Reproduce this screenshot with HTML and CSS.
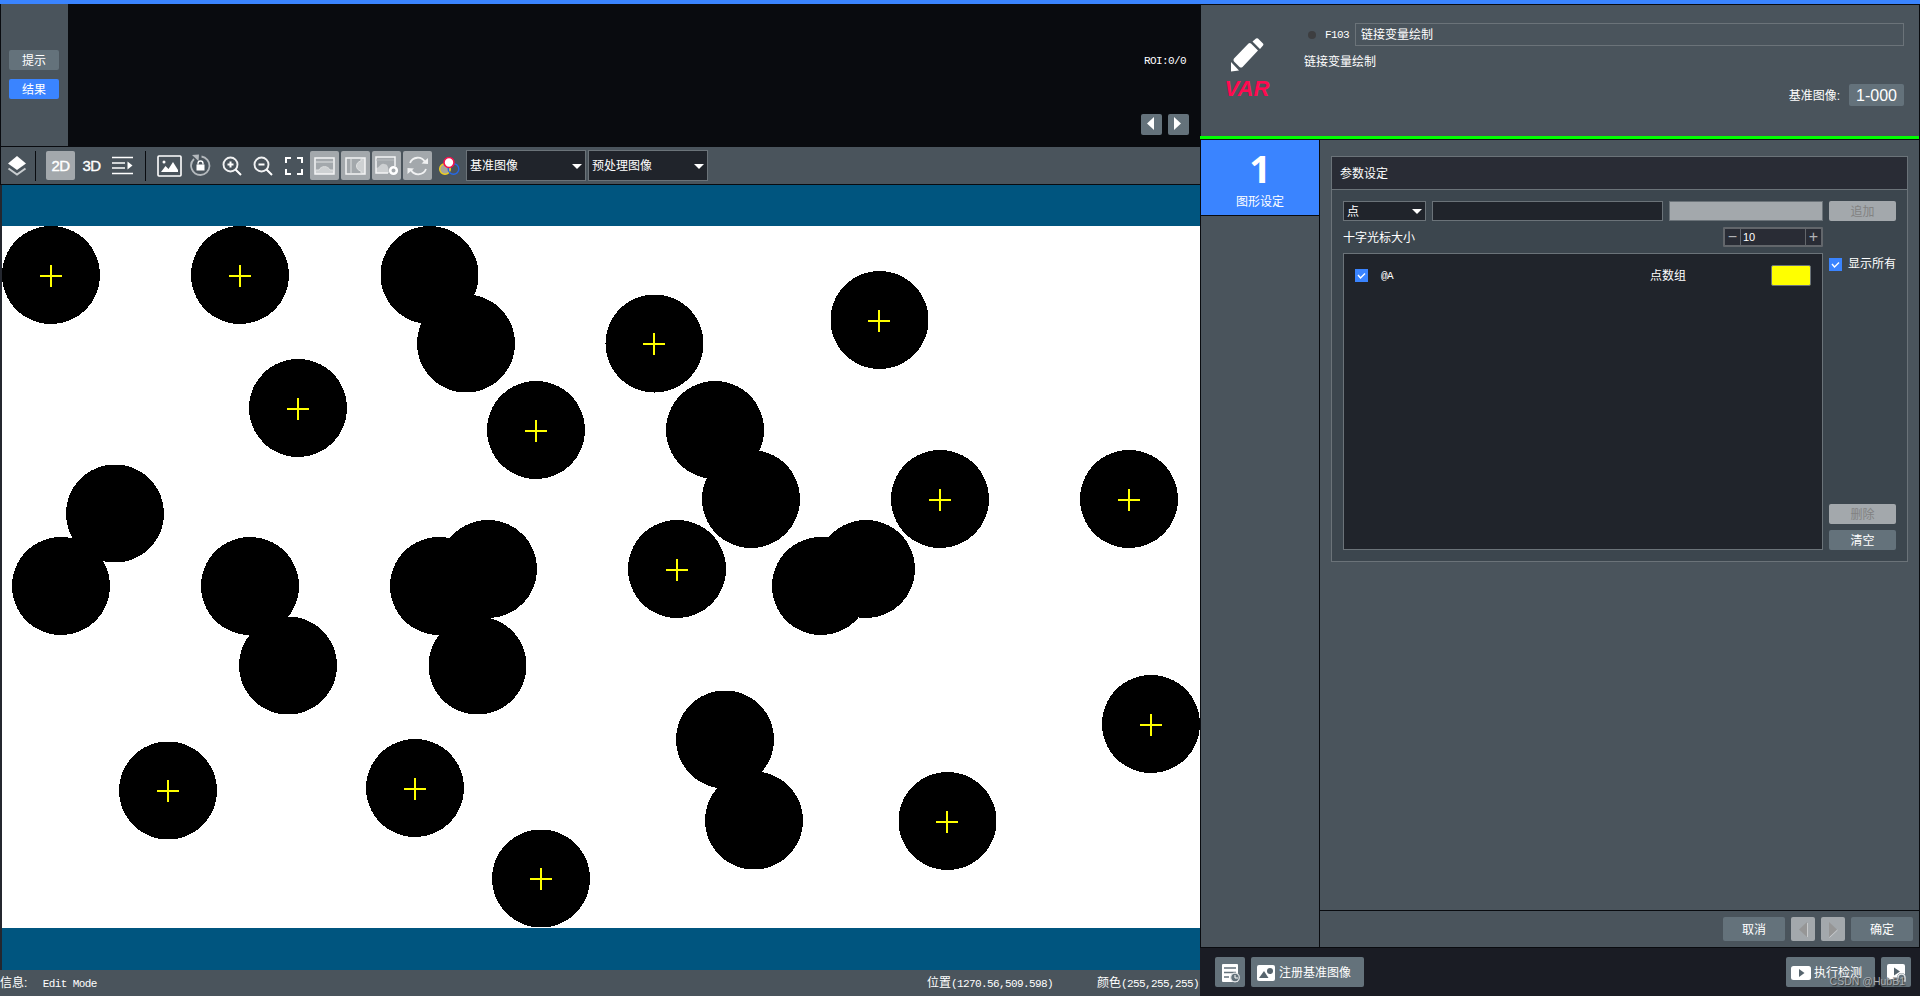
FILE: index.html
```html
<!DOCTYPE html>
<html lang="zh-CN">
<head>
  <meta charset="UTF-8">
  <title>链接变量绘制</title>
  <link rel="stylesheet" href="styles.css">
</head>
<body>
  <div class="top-line"></div>
  <div class="app">

    <!-- Left side: result view, toolbar, image -->
    <div class="viewer">
      <div class="result">
        <div class="result-tabs">
          <button class="btn">提示</button>
          <button class="btn active">结果</button>
        </div>
        <div class="result-view">
          <span class="roi mono">ROI:0/0</span>
          <div class="pager">
            <button class="btn"><svg width="21" height="21"><path d="M13 3v13L6 9.500z" fill="#fff"/></svg></button>
            <button class="btn"><svg width="21" height="21"><path d="M6 3v13l7-6.500z" fill="#fff"/></svg></button>
          </div>
        </div>
      </div>

      <div class="toolbar">
        <div class="tool layers">
          <svg width="20" height="22" viewBox="0 0 20 22"><path d="M10 1l9 7.500-9 6.500-9-6.500z" fill="#fff"/><path d="M1.500 13.500L10 19.500l8.500-6" fill="none" stroke="#c9cdd0" stroke-width="2"/></svg>
        </div>
        <div class="sep"></div>
        <div class="tool on text">2D</div>
        <div class="tool text">3D</div>
        <div class="tool">
          <svg width="23" height="19" viewBox="0 0 23 19"><path d="M1 1.500h21M1 7h13M1 12h13M1 17.500h21" stroke="#fff" stroke-width="1.700"/><path d="M16.500 5.500v8l5-4z" fill="#fff"/></svg>
        </div>
        <div class="sep second"></div>
        <div class="tool">
          <svg width="25" height="22" viewBox="0 0 25 22"><rect x="1" y="1" width="23" height="20" rx="1" fill="none" stroke="#fff" stroke-width="1.600"/><path d="M4 17l4.500-6 3 3L16 7l5 8v2z" fill="#fff"/><circle cx="7" cy="7" r="1.500" fill="#fff"/></svg>
        </div>
        <div class="tool">
          <svg width="23" height="23" viewBox="0 0 23 23"><path d="M5 5a9.300 9.300 0 0 0 6.500 16 9.300 9.300 0 0 0 1-18.500" fill="none" stroke="#b4b9bd" stroke-width="1.800"/><path d="M3 1l7-.5-.5 6.500z" fill="#b4b9bd"/><rect x="7.500" y="10.500" width="8" height="6" fill="#fff"/><path d="M9 10.500v-1a2.500 2.500 0 0 1 5 0v1" fill="none" stroke="#fff" stroke-width="1.300"/></svg>
        </div>
        <div class="tool">
          <svg width="20" height="20" viewBox="0 0 20 20"><circle cx="8.500" cy="8.500" r="7" fill="none" stroke="#f0f1f2" stroke-width="1.900"/><path d="M13.500 13.500l5.500 5.500M8.500 5.500v6M5.500 8.500h6" stroke="#fff" stroke-width="2"/></svg>
        </div>
        <div class="tool">
          <svg width="20" height="20" viewBox="0 0 20 20"><circle cx="8.500" cy="8.500" r="7" fill="none" stroke="#f0f1f2" stroke-width="1.900"/><path d="M13.500 13.500l5.500 5.500M5.500 8.500h6" stroke="#fff" stroke-width="2"/></svg>
        </div>
        <div class="tool">
          <svg width="18" height="18" viewBox="0 0 18 18"><path d="M1 6V1h5M12 1h5v5M17 12v5h-5M6 17H1v-5" fill="none" stroke="#fff" stroke-width="2"/></svg>
        </div>
        <div class="tool on">
          <svg width="21" height="18" viewBox="0 0 21 18"><path d="M1 13h4c2-4.500 9-4.500 11 0h4v4H1z" fill="#cdd0d2"/><rect x="1" y="1" width="19" height="16" fill="none" stroke="#f4f4f5" stroke-width="1.500"/><path d="M1 5h19M1 13h4c2-4.500 9-4.500 11 0h4" fill="none" stroke="#dfe1e2"/></svg>
        </div>
        <div class="tool on">
          <svg width="21" height="18" viewBox="0 0 21 18"><path d="M20 1v16h-4v-3c-6-1-6-9 0-10V1z" fill="#cdd0d2"/><rect x="1" y="1" width="19" height="16" fill="none" stroke="#f4f4f5" stroke-width="1.500"/><path d="M6 1v16M16 1v3c-6 1-6 9 0 10v3" fill="none" stroke="#dfe1e2"/></svg>
        </div>
        <div class="tool on">
          <svg width="24" height="20" viewBox="0 0 24 20"><path d="M1 12c4 0 4-5 8-4 4 0 4 3 5 9H1z" fill="#cdd0d2"/><path d="M13 17H1V1h19v9" fill="none" stroke="#f4f4f5" stroke-width="1.500"/><path d="M1 4h18" stroke="#b9bdc0"/><circle cx="18.500" cy="14.500" r="3.300" fill="none" stroke="#fff" stroke-width="2.600"/></svg>
        </div>
        <div class="tool on">
          <svg width="22" height="20" viewBox="0 0 22 20"><path d="M3 7a8.300 8.300 0 0 1 15-1M19 13A8.300 8.300 0 0 1 4 14" fill="none" stroke="#f0f1f2" stroke-width="1.800"/><path d="M14.500 7.500l6.500.5v-6zM7 12.500L.5 12v6z" fill="#f0f1f2"/></svg>
        </div>
        <div class="tool rgb">
          <svg width="22" height="20" viewBox="0 0 22 20"><circle cx="7" cy="13" r="5.300" fill="#a8a69a" stroke="#f2d21c" stroke-width="1.400"/><circle cx="15.500" cy="13" r="5.300" fill="none" stroke="#2468e8" stroke-width="1.400"/><circle cx="11" cy="6.500" r="5" fill="#fff" stroke="#f5114e" stroke-width="1.600"/></svg>
        </div>
        <div class="select">基准图像<i></i></div>
        <div class="select">预处理图像<i></i></div>
      </div>

      <div class="canvas">
        <svg width="1198" height="785" viewBox="2 185 1198 785">
          <rect x="2" y="226" width="1198" height="702" fill="#fff"/>
          <g id="dots" shape-rendering="crispEdges"></g>
        </svg>
      </div>

      <div class="status">
        <span>信息: <span class="mono mode">Edit Mode</span></span>
        <span class="pos">位置<span class="mono">(1270.56,509.598)</span></span>
        <span>颜色<span class="mono">(255,255,255)</span></span>
      </div>
    </div>

    <!-- Right side: tool settings -->
    <div class="settings">
      <div class="head">
        <div class="logo">
          <svg width="34" height="34" viewBox="0 0 34 34"><path d="M22.500 3.500L26 .5q1-.7 2 0l5 5q.8 1 0 2l-3 3.500zM21 5.500l7 7L12.500 29q-1.500 1-3 0L4 23.500q-1-1.500 0-3L18.500 5.500q1.200-1 2.500 0zM1 24l8 8.500-8 1z" fill="#fff"/></svg>
          <span>VAR</span>
        </div>
        <div class="head-info">
          <div class="name-row">
            <span class="dot"></span>
            <span class="mono">F103</span>
            <div class="name-input">链接变量绘制</div>
          </div>
          <div class="desc">链接变量绘制</div>
          <div class="base-row">
            <span>基准图像:</span>
            <button class="btn base-btn">1-000</button>
          </div>
        </div>
      </div>

      <div class="work">
        <div class="steps">
          <div class="step"><b>1</b><span>图形设定</span></div>
        </div>
        <div class="page">
          <div class="panel">
            <div class="panel-title">参数设定</div>
            <div class="panel-body">
              <div class="add-row">
                <div class="select small">点<i></i></div>
                <div class="field"></div>
                <div class="field off"></div>
                <button class="btn off">追加</button>
              </div>
              <div class="size-row">
                <span>十字光标大小</span>
                <div class="spinner"><i>−</i><span class="num">10</span><i>+</i></div>
              </div>
              <div class="list-row">
                <div class="list">
                  <div class="item">
                    <span class="check"><svg width="13" height="13"><path d="M3 6l2.500 3L10 4.500" fill="none" stroke="#fff" stroke-width="1.400"/></svg></span>
                    <span class="mono item-name">@A</span>
                    <span class="item-type">点数组</span>
                    <span class="swatch"></span>
                  </div>
                </div>
                <div class="side">
                  <label class="show-all"><span class="check"><svg width="13" height="13"><path d="M3 6l2.500 3L10 4.500" fill="none" stroke="#fff" stroke-width="1.400"/></svg></span>显示所有</label>
                  <button class="btn off">删除</button>
                  <button class="btn">清空</button>
                </div>
              </div>
            </div>
          </div>
          <div class="actions">
            <button class="btn wide">取消</button>
            <button class="btn off"><svg width="24" height="24"><path d="M16 4v15l-8-7.500z" fill="#969696"/><path d="M16.500 5v14" stroke="#c8cacc"/></svg></button>
            <button class="btn off"><svg width="24" height="24"><path d="M8 4v15l8-7.500z" fill="#969696"/><path d="M8.500 19.500l8-7.500" stroke="#c8cacc"/></svg></button>
            <button class="btn wide">确定</button>
          </div>
        </div>
      </div>

      <div class="bottom">
        <button class="btn square">
          <svg width="19" height="20" viewBox="0 0 19 20"><path d="M2 1h14q1 0 1 1v16q0 1-1 1H2q-1 0-1-1V2q0-1 1-1z" fill="#fff"/><path d="M3 5h12M3 9.500h12M3 14h5" stroke="#64727b" stroke-width="1.500"/><circle cx="14" cy="14.500" r="4.300" fill="#64727b" stroke="#dfe2e4" stroke-width="1.200"/><path d="M14 12v3h3" fill="none" stroke="#fff"/></svg>
        </button>
        <button class="btn register">
          <svg width="18" height="16" viewBox="0 0 18 16"><rect width="18" height="16" rx="2" fill="#fff"/><path d="M2 13l5-7 4.500 7z" fill="#56646d"/><circle cx="13" cy="6" r="3" fill="#56646d"/></svg>
          注册基准图像
        </button>
        <div class="fill"></div>
        <button class="btn run">
          <svg width="20" height="14" viewBox="0 0 20 14"><rect width="20" height="14" rx="2.500" fill="#fff"/><path d="M8 3v8l5.500-4z" fill="#56646d"/></svg>
          执行检测
        </button>
        <button class="btn square">
          <svg width="20" height="20" viewBox="0 0 20 20"><rect x="1" y="1" width="18" height="15" rx="2" fill="#fff"/><path d="M8 4.500v8l6-4z" fill="#56646d"/><path d="M12 19v-4.500a3.500 3.500 0 0 1 7 0V19" fill="#64727b" stroke="#64727b" stroke-width="2"/><path d="M13.500 18H12v-3.500a3.300 3.300 0 0 1 7 0V18h-1.500" fill="none" stroke="#e4e6e8" stroke-width="1.400"/></svg>
        </button>
      </div>
      <div class="watermark">CSDN @HubB1</div>
    </div>
  </div>

  <script>
    // x, y, 1 = has a cross mark
    const dots = [
      [51, 275, 1], [240, 275, 1], [429.5, 275, 0], [466, 343.5, 0], [654.5, 343.5, 1],
      [879.5, 320, 1], [298, 408, 1], [536, 430, 1], [715, 430, 0], [751, 499, 0],
      [940, 499, 1], [1129, 499, 1], [115, 513.5, 0], [61, 586, 0], [250, 586, 0],
      [439, 586, 0], [488, 569, 0], [677, 569, 1], [821, 586, 0], [866, 569, 0],
      [288, 665.5, 0], [477.5, 665.5, 0], [725, 739.5, 0], [754, 820.5, 0], [947.5, 821, 1],
      [1151, 724, 1], [168, 790.5, 1], [415, 788, 1], [541, 878.5, 1]
    ];
    let out = '';
    dots.forEach(([x, y]) => {
      out += `<circle cx="${x}" cy="${y}" r="49"/>`;
    });
    dots.filter(d => d[2]).forEach(([x, y]) => {
      x = Math.floor(x);
      y = Math.floor(y + 1);
      out += `<path d="M${x - 11} ${y}h22M${x} ${y - 11}v22" stroke="#ff0" stroke-width="2"/>`;
    });
    document.getElementById('dots').innerHTML = out;
  </script>
</body>
</html>
```
FILE: styles.css
```css
* {
  box-sizing: border-box;
}
body {
  margin: 0;
  height: 996px;
  overflow: hidden;
  background: #090b0f;
  color: #fff;
  font-family: "Liberation Sans", "Noto Sans CJK SC", sans-serif;
  font-size: 12px;
  line-height: 16px;
}
svg {
  display: block;
  flex: none;
}
.mono {
  font-family: "Liberation Mono", monospace;
  font-size: 11px;
  letter-spacing: -0.6px;
}
.top-line {
  height: 4px;
  background: #3a84ff;
}
.app {
  display: flex;
  height: 992px;
}
.btn {
  display: flex;
  align-items: center;
  justify-content: center;
  height: 20px;
  padding: 1px 0 0;
  border: 0;
  border-radius: 2px;
  background: #64727b;
  color: #fff;
  font: inherit;
}
.btn.active {
  background: #3a84ff;
}
.btn.off {
  background: #a3a8ac;
  color: #828282;
}

/* viewer */
.viewer {
  display: flex;
  flex-direction: column;
  width: 1200px;
}
.result {
  display: flex;
  height: 142px;
  padding-left: 1px;
}
.result-tabs {
  display: flex;
  flex-direction: column;
  gap: 9px;
  width: 67px;
  padding: 46px 9px 0 8px;
  background: #4a545c;
}
.result-view {
  flex: 1;
  display: flex;
  flex-direction: column;
  align-items: flex-end;
  padding: 49px 11px 0 0;
}
.roi {
  padding-right: 3px;
}
.pager {
  display: flex;
  gap: 6px;
  margin-top: 45px;
}
.pager .btn {
  width: 21px;
  height: 21px;
  padding: 0;
}
.toolbar {
  display: flex;
  align-items: center;
  gap: 2px;
  height: 39px;
  margin-left: 1px;
  border-top: 1px solid #090b0f;
  border-bottom: 1px solid #090b0f;
  background: #4a545c;
}
.tool {
  display: flex;
  align-items: center;
  justify-content: center;
  width: 29px;
  height: 29px;
  border-radius: 2px;
}
.tool.layers {
  width: 32px;
}
.tool.on {
  background: #a3a8ac;
}
.tool.text {
  font-size: 15px;
  letter-spacing: -0.5px;
  -webkit-text-stroke: 0.4px #fff;
}
.tool.rgb {
  margin-right: 1px;
}
.sep {
  width: 1px;
  height: 30px;
  margin-right: 8px;
  background: #090b0f;
}
.sep.second {
  margin: 0 7px 0 6px;
}
.select {
  display: flex;
  align-items: center;
  justify-content: space-between;
  width: 120px;
  height: 31px;
  padding: 1px 3px 0 3px;
  border: 1px solid #6b7379;
  background: #20242b;
}
.select i {
  border: 5px solid transparent;
  border-top-color: #fff;
  border-bottom: 0;
}
.canvas {
  height: 785px;
  padding-left: 2px;
  background: linear-gradient(to right, #24272f 2px, #00557f 2px);
}
.status {
  display: flex;
  height: 26px;
  padding: 1px 1px 0 0;
  align-items: center;
  background: #4a545c;
}
.mode {
  margin-left: 12px;
}
.pos {
  margin: 0 44px 0 auto;
}

/* settings */
.settings {
  display: flex;
  flex-direction: column;
  width: 720px;
  padding: 1px 1px 0 0;
}
.head {
  display: flex;
  height: 134px;
  border-bottom: 3px solid #0f0;
  background: linear-gradient(to right, #090b0f 1px, #4a545c 1px);
}
.logo {
  display: flex;
  flex-direction: column;
  align-items: center;
  width: 94px;
  padding: 33px 0 0 0;
}
.logo span {
  margin-top: 6px;
  color: #ff0a50;
  font-size: 22px;
  line-height: 22px;
  font-weight: bold;
  font-style: italic;
}
.head-info {
  flex: 1;
  padding: 18px 15px 0 10px;
}
.name-row {
  display: flex;
  align-items: center;
}
.dot {
  width: 8px;
  height: 8px;
  margin: 0 9px 0 4px;
  border-radius: 50%;
  background: #3d3e40;
}
.name-input {
  flex: 1;
  height: 23px;
  margin-left: 6px;
  padding: 3px 5px;
  border: 1px solid #6b7379;
}
.desc {
  margin-top: 8px;
}
.base-row {
  display: flex;
  justify-content: flex-end;
  align-items: center;
  gap: 9px;
  margin-top: 14px;
  padding-top: 0;
}
.base-row span {
  padding-top: 1px;
}
.base-btn {
  width: 55px;
  height: 22px;
  padding-top: 2px;
  font-size: 16px;
}
.work {
  display: flex;
  height: 808px;
  padding: 1px 0 0 1px;
}
.steps {
  width: 118px;
  background: #4a545c;
}
.step {
  display: flex;
  flex-direction: column;
  align-items: center;
  height: 76px;
  padding-top: 10px;
  border-bottom: 1px solid #090b0f;
  background: #3a84ff;
}
.step b {
  font-family: "Noto Sans", sans-serif;
  font-size: 38px;
  line-height: 36px;
}
.step span {
  margin-top: 8px;
}
.page {
  flex: 1;
  display: flex;
  flex-direction: column;
  justify-content: space-between;
  margin-left: 1px;
  padding: 16px 0 0;
  background: #4a545c;
}
.panel {
  height: 406px;
  margin: 0 11px;
  border: 1px solid #6b7379;
  background: #3c464e;
}
.panel-title {
  height: 33px;
  padding: 9px 8px 7px;
  border-bottom: 1px solid #6b7379;
  background: #292c35;
}
.panel-body {
  padding: 11px 11px 0;
}
.add-row {
  display: flex;
  gap: 6px;
}
.select.small {
  width: 83px;
  height: 20px;
}
.field {
  flex: 1;
  height: 20px;
  border: 1px solid #6b7379;
  background: #20242b;
}
.field.off {
  flex: none;
  width: 154px;
  background: #a3a8ac;
}
.add-row .btn {
  width: 67px;
}
.size-row {
  display: flex;
  justify-content: space-between;
  align-items: center;
  height: 20px;
  margin: 6px 73px 6px 0;
}
.size-row > span {
  padding-top: 1px;
}
.spinner {
  display: flex;
  width: 100px;
  height: 20px;
  border: 2px solid #62666b;
  border-radius: 1px;
  background: #292c35;
}
.spinner i {
  width: 15px;
  color: #b0b2b5;
  font-size: 16px;
  font-style: normal;
  text-align: center;
}
.spinner .num {
  flex: 1;
  padding-left: 2px;
  border: solid #62666b;
  border-width: 0 1px;
  font-size: 11px;
}
.list-row {
  display: flex;
  gap: 6px;
  height: 297px;
}
.list {
  flex: 1;
  border: 1px solid #6b7379;
  background: #20242b;
}
.item {
  display: flex;
  align-items: center;
  padding: 11px 11px 0;
}
.check {
  width: 13px;
  height: 13px;
  background: #3a84ff;
}
.item-name {
  flex: 1;
  margin-left: 13px;
}
.item-type {
  width: 121px;
  padding-top: 1px;
}
.swatch {
  width: 40px;
  height: 21px;
  border: 1px solid #6b7379;
  border-radius: 2px;
  background: #ff0;
}
.side {
  display: flex;
  flex-direction: column;
  gap: 6px;
  width: 67px;
}
.show-all {
  display: flex;
  align-items: center;
  gap: 6px;
  margin: 3px 0 auto;
  white-space: nowrap;
}
.actions {
  display: flex;
  justify-content: flex-end;
  gap: 6px;
  height: 37px;
  padding: 6px 6px 0;
  border-top: 1px solid #090b0f;
}
.actions .btn {
  width: 24px;
  height: 24px;
}
.actions .wide {
  width: 62px;
}
.bottom {
  display: flex;
  gap: 6px;
  height: 49px;
  margin-right: -1px;
  padding: 9px 9px 0 15px;
  border-top: 1px solid #090b0f;
  background: #1a1c24;
}
.bottom .btn {
  height: 30px;
}
.bottom .square {
  width: 30px;
}
.bottom .register {
  justify-content: flex-start;
  gap: 4px;
  width: 113px;
  padding-left: 6px;
}
.bottom .run {
  justify-content: flex-start;
  gap: 3px;
  width: 89px;
  padding-left: 5px;
}
.fill {
  flex: 1;
}
.watermark {
  position: absolute;
  right: 15px;
  bottom: 7px;
  color: #a9adb1;
  font-size: 10.5px;
  line-height: 16px;
  text-shadow: 1px 1px 1px #333;
}
```
